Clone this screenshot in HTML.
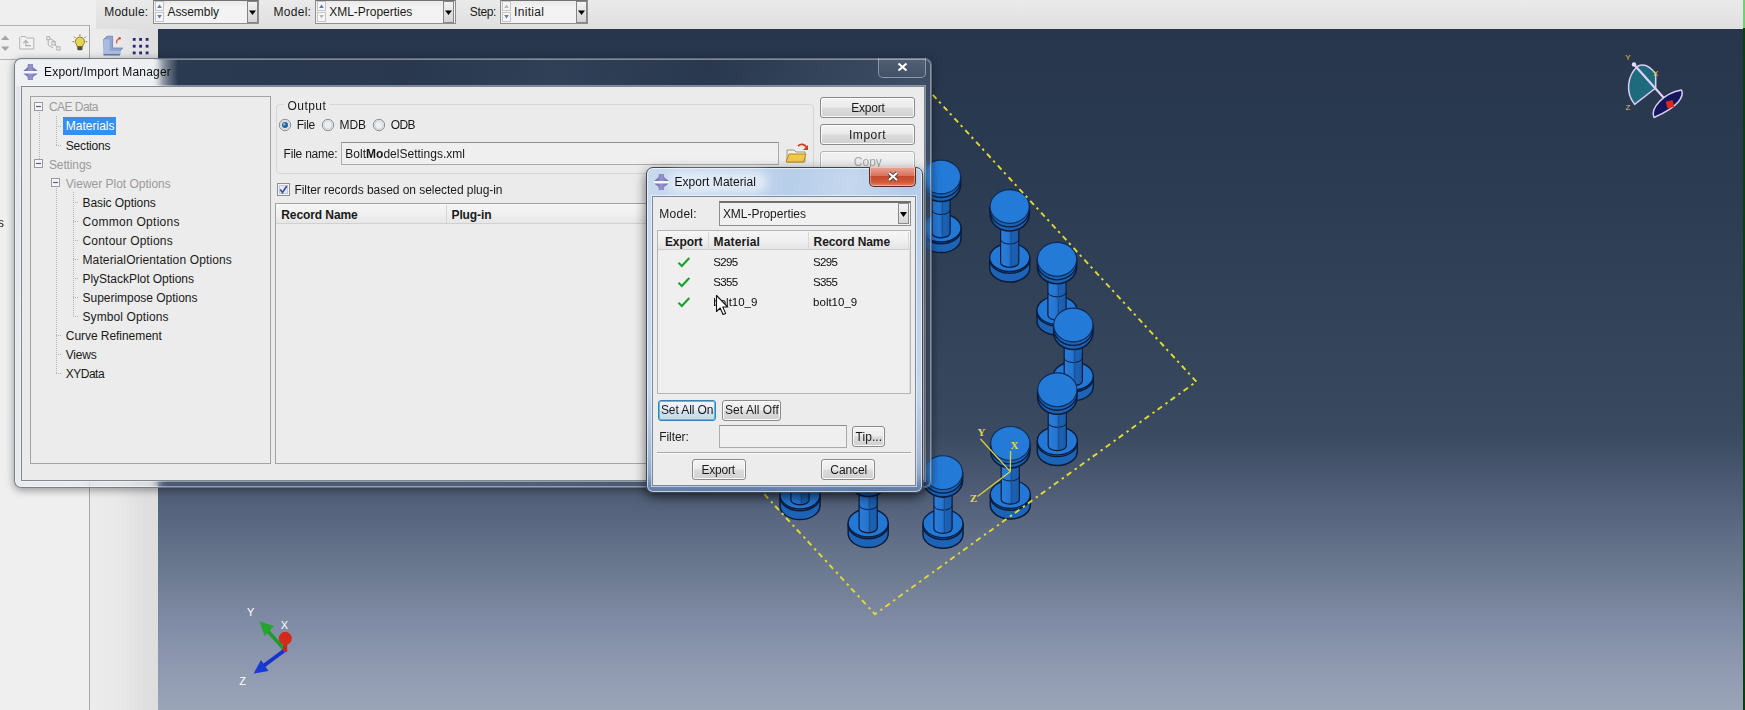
<!DOCTYPE html><html><head><meta charset="utf-8"><title>Abaqus/CAE - Export/Import Manager</title><style>
*{box-sizing:border-box;margin:0;padding:0}
html,body{width:1745px;height:710px;overflow:hidden;background:#f0f0f0;font-family:"Liberation Sans",sans-serif;font-size:12px;color:#1a1a1a}
.a{position:absolute}
.t{position:absolute;white-space:nowrap;line-height:16px;height:16px;font-size:12px;transform-origin:0 50%}
.b{font-weight:bold}
.g{color:#9a9a9a}
.btn{position:absolute;border:1px solid #8a8a8a;border-radius:3px;background:linear-gradient(#f4f4f4 0%,#ebebeb 48%,#dcdcdc 52%,#d0d0d0 100%);box-shadow:inset 0 0 0 1px #fafafa}
.btn span{position:absolute;left:0;right:0;text-align:center;line-height:16px;font-size:12px}
.combo{position:absolute;border:1px solid #8e8e8e;border-top:2px solid #707070;background:linear-gradient(#e9e9e9,#f3f3f3 30%,#f3f3f3)}
.panel{position:absolute;border:1px solid #a3a3a3;background:#ececec}
</style></head><body>
<div class="a" style="left:0;top:0;width:158px;height:710px;background:#efefef"></div>
<div class="a" style="left:90px;top:28px;width:68px;height:682px;background:linear-gradient(90deg,#ececec,#e9e9e9 40%,#dfdfdf 80%,#dedede)"></div>
<div class="a" style="left:89px;top:26px;width:1px;height:684px;background:#a9a9a9"></div>
<div class="a" style="left:0;top:25px;width:90px;height:1px;background:#b0b0b0"></div>
<div class="a" style="left:96px;top:0;width:1649px;height:28.5px;background:linear-gradient(#eaeaea,#dfdfdf)"></div>
<div class="a" style="left:158px;top:28.5px;width:1587px;height:681.5px;background:linear-gradient(#27364c 0%,#2b3b51 22%,#37475e 54.5%,#3a4a61 59.5%,#4d5c74 67.3%,#5d6c84 73.8%,#6d7b92 80.2%,#7e8aa3 86.5%,#8d98b0 93%,#9aa5b8 100%)"></div>
<div class="a" style="left:1743px;top:0;width:2px;height:28px;background:#6fd06f"></div>
<div class="a" style="left:1743px;top:28px;width:2px;height:682px;background:#0b3f0b"></div>
<div class="t " style="left:104.2px;top:4.300000000000001px;font-size:12px;letter-spacing:0.214px;">Module:</div>
<div class="combo" style="left:152.7px;top:-1px;width:106.5px;height:25px"></div>
<div class="a" style="left:154.7px;top:1px;width:9px;height:10px;border:1px solid #c5c5c5;background:#f6f6f6"></div>
<div class="a" style="left:154.7px;top:12px;width:9px;height:10px;border:1px solid #c5c5c5;background:#f6f6f6"></div>
<svg class="a" style="left:154.7px;top:1px" width="9" height="21"><path d="M4.5 3.500 L6.800 7 L2.200 7Z" fill="#5b76cc"/><path d="M2.200 14 L6.800 14 L4.500 17.500Z" fill="#5b76cc"/></svg>
<div class="t " style="left:167.5px;top:4.300000000000001px;font-size:12px;letter-spacing:-0.077px;">Assembly</div>
<div class="a" style="left:246.7px;top:1px;width:11px;height:21.5px;border:1px solid #858585;background:linear-gradient(#f3f3f3,#d4d4d4)"></div>
<svg class="a" style="left:246.7px;top:1px" width="11" height="21"><path d="M2 9.500 L9 9.500 L5.500 14Z" fill="#000"/></svg>
<div class="t " style="left:273.6px;top:4.300000000000001px;font-size:12px;letter-spacing:0.261px;">Model:</div>
<div class="combo" style="left:314.7px;top:-1px;width:141px;height:25px"></div>
<div class="a" style="left:316.7px;top:1px;width:9px;height:10px;border:1px solid #c5c5c5;background:#f6f6f6"></div>
<div class="a" style="left:316.7px;top:12px;width:9px;height:10px;border:1px solid #c5c5c5;background:#f6f6f6"></div>
<svg class="a" style="left:316.7px;top:1px" width="9" height="21"><path d="M4.5 3.500 L6.800 7 L2.200 7Z" fill="#5b76cc"/><path d="M2.200 14 L6.800 14 L4.500 17.500Z" fill="#b8b8b8"/></svg>
<div class="t " style="left:329.2px;top:4.300000000000001px;font-size:12px;letter-spacing:-0.020px;">XML-Properties</div>
<div class="a" style="left:443.2px;top:1px;width:11px;height:21.5px;border:1px solid #858585;background:linear-gradient(#f3f3f3,#d4d4d4)"></div>
<svg class="a" style="left:443.2px;top:1px" width="11" height="21"><path d="M2 9.500 L9 9.500 L5.500 14Z" fill="#000"/></svg>
<div class="t " style="left:469.8px;top:4.300000000000001px;font-size:12px;letter-spacing:-0.346px;">Step:</div>
<div class="combo" style="left:499.9px;top:-1px;width:88.3px;height:25px"></div>
<div class="a" style="left:501.9px;top:1px;width:9px;height:10px;border:1px solid #c5c5c5;background:#f6f6f6"></div>
<div class="a" style="left:501.9px;top:12px;width:9px;height:10px;border:1px solid #c5c5c5;background:#f6f6f6"></div>
<svg class="a" style="left:501.9px;top:1px" width="9" height="21"><path d="M4.5 3.500 L6.800 7 L2.200 7Z" fill="#b8b8b8"/><path d="M2.200 14 L6.800 14 L4.500 17.500Z" fill="#5b76cc"/></svg>
<div class="t " style="left:514px;top:4.300000000000001px;font-size:12px;letter-spacing:0.326px;">Initial</div>
<div class="a" style="left:575.6999999999999px;top:1px;width:11px;height:21.5px;border:1px solid #858585;background:linear-gradient(#f3f3f3,#d4d4d4)"></div>
<svg class="a" style="left:575.6999999999999px;top:1px" width="11" height="21"><path d="M2 9.500 L9 9.500 L5.500 14Z" fill="#000"/></svg>
<svg class="a" style="left:0;top:0" width="1745" height="710" viewBox="0 0 1745 710"><defs><linearGradient id="shk" x1="0" x2="1" y1="0" y2="0"><stop offset="0" stop-color="#2a7ddb"/><stop offset=".45" stop-color="#2576d2"/><stop offset=".55" stop-color="#1d63b4"/><stop offset="1" stop-color="#1b5cab"/></linearGradient></defs><g><path d="M921.0 228 v10.6 a20.0 14.0 0 0 0 40.0 0 v-10.6z" fill="#1d64b6" stroke="#0b1c3d" stroke-width="1.5"/><path d="M921.0 229.8 a20.0 14.0 0 0 0 40.0 0" fill="none" stroke="#0b1c3d" stroke-width="1.5"/><ellipse cx="941" cy="228" rx="20.0" ry="14.0" fill="#2378d6" stroke="#0b1c3d" stroke-width="1.3"/><path d="M931.9 185 V233 a9.1 4.800 0 0 0 18.2 0 V185z" fill="url(#shk)" stroke="#0b1c3d" stroke-width="1.2"/><path d="M931.9 210 a9.1 4.500 0 0 0 18.2 0" fill="none" stroke="#0b1c3d" stroke-width="1"/><path d="M942.5 199 V236.5" stroke="#184f98" stroke-width="1"/><path d="M921.4 177 v7.600 a19.6 16.9 0 0 0 39.2 0 v-7.600z" fill="#1c62b3" stroke="#0b1c3d" stroke-width="1.600"/><path d="M921.4 180.6 a19.6 16.9 0 0 0 39.2 0" fill="none" stroke="#0b1c3d" stroke-width="1.300"/><ellipse cx="941" cy="177" rx="19.6" ry="16.9" fill="#247ad7" stroke="#0f2a58" stroke-width="1.100"/></g><g><path d="M989.7 257.5 v10.6 a20.0 14.0 0 0 0 40.0 0 v-10.6z" fill="#1d64b6" stroke="#0b1c3d" stroke-width="1.5"/><path d="M989.7 259.3 a20.0 14.0 0 0 0 40.0 0" fill="none" stroke="#0b1c3d" stroke-width="1.5"/><ellipse cx="1009.7" cy="257.5" rx="20.0" ry="14.0" fill="#2378d6" stroke="#0b1c3d" stroke-width="1.3"/><path d="M1000.6 214.5 V262.5 a9.1 4.800 0 0 0 18.2 0 V214.5z" fill="url(#shk)" stroke="#0b1c3d" stroke-width="1.2"/><path d="M1000.6 239.5 a9.1 4.500 0 0 0 18.2 0" fill="none" stroke="#0b1c3d" stroke-width="1"/><path d="M1011.2 228.5 V266.0" stroke="#184f98" stroke-width="1"/><path d="M990.1 206.5 v7.600 a19.6 16.9 0 0 0 39.2 0 v-7.600z" fill="#1c62b3" stroke="#0b1c3d" stroke-width="1.600"/><path d="M990.1 210.1 a19.6 16.9 0 0 0 39.2 0" fill="none" stroke="#0b1c3d" stroke-width="1.300"/><ellipse cx="1009.7" cy="206.5" rx="19.6" ry="16.9" fill="#247ad7" stroke="#0f2a58" stroke-width="1.100"/></g><g><path d="M1037.0 310.3 v10.6 a20.0 14.0 0 0 0 40.0 0 v-10.6z" fill="#1d64b6" stroke="#0b1c3d" stroke-width="1.5"/><path d="M1037.0 312.1 a20.0 14.0 0 0 0 40.0 0" fill="none" stroke="#0b1c3d" stroke-width="1.5"/><ellipse cx="1057" cy="310.3" rx="20.0" ry="14.0" fill="#2378d6" stroke="#0b1c3d" stroke-width="1.3"/><path d="M1047.9 267.3 V315.3 a9.1 4.800 0 0 0 18.2 0 V267.3z" fill="url(#shk)" stroke="#0b1c3d" stroke-width="1.2"/><path d="M1047.9 292.3 a9.1 4.500 0 0 0 18.2 0" fill="none" stroke="#0b1c3d" stroke-width="1"/><path d="M1058.5 281.3 V318.8" stroke="#184f98" stroke-width="1"/><path d="M1037.4 259.3 v7.600 a19.6 16.9 0 0 0 39.2 0 v-7.600z" fill="#1c62b3" stroke="#0b1c3d" stroke-width="1.600"/><path d="M1037.4 262.90000000000003 a19.6 16.9 0 0 0 39.2 0" fill="none" stroke="#0b1c3d" stroke-width="1.300"/><ellipse cx="1057" cy="259.3" rx="19.6" ry="16.9" fill="#247ad7" stroke="#0f2a58" stroke-width="1.100"/></g><g><path d="M1053.3 376 v10.6 a20.0 14.0 0 0 0 40.0 0 v-10.6z" fill="#1d64b6" stroke="#0b1c3d" stroke-width="1.5"/><path d="M1053.3 377.8 a20.0 14.0 0 0 0 40.0 0" fill="none" stroke="#0b1c3d" stroke-width="1.5"/><ellipse cx="1073.3" cy="376" rx="20.0" ry="14.0" fill="#2378d6" stroke="#0b1c3d" stroke-width="1.3"/><path d="M1064.2 333 V381 a9.1 4.800 0 0 0 18.2 0 V333z" fill="url(#shk)" stroke="#0b1c3d" stroke-width="1.2"/><path d="M1064.2 358 a9.1 4.500 0 0 0 18.2 0" fill="none" stroke="#0b1c3d" stroke-width="1"/><path d="M1074.8 347 V384.5" stroke="#184f98" stroke-width="1"/><path d="M1053.7 325 v7.600 a19.6 16.9 0 0 0 39.2 0 v-7.600z" fill="#1c62b3" stroke="#0b1c3d" stroke-width="1.600"/><path d="M1053.7 328.6 a19.6 16.9 0 0 0 39.2 0" fill="none" stroke="#0b1c3d" stroke-width="1.300"/><ellipse cx="1073.3" cy="325" rx="19.6" ry="16.9" fill="#247ad7" stroke="#0f2a58" stroke-width="1.100"/></g><g><path d="M1037.3 440.8 v10.6 a20.0 14.0 0 0 0 40.0 0 v-10.6z" fill="#1d64b6" stroke="#0b1c3d" stroke-width="1.5"/><path d="M1037.3 442.6 a20.0 14.0 0 0 0 40.0 0" fill="none" stroke="#0b1c3d" stroke-width="1.5"/><ellipse cx="1057.3" cy="440.8" rx="20.0" ry="14.0" fill="#2378d6" stroke="#0b1c3d" stroke-width="1.3"/><path d="M1048.2 397.8 V445.8 a9.1 4.800 0 0 0 18.2 0 V397.8z" fill="url(#shk)" stroke="#0b1c3d" stroke-width="1.2"/><path d="M1048.2 422.8 a9.1 4.500 0 0 0 18.2 0" fill="none" stroke="#0b1c3d" stroke-width="1"/><path d="M1058.8 411.8 V449.3" stroke="#184f98" stroke-width="1"/><path d="M1037.7 389.8 v7.600 a19.6 16.9 0 0 0 39.2 0 v-7.600z" fill="#1c62b3" stroke="#0b1c3d" stroke-width="1.600"/><path d="M1037.7 393.40000000000003 a19.6 16.9 0 0 0 39.2 0" fill="none" stroke="#0b1c3d" stroke-width="1.300"/><ellipse cx="1057.3" cy="389.8" rx="19.6" ry="16.9" fill="#247ad7" stroke="#0f2a58" stroke-width="1.100"/></g><g><path d="M990.3 494.4 v10.6 a20.0 14.0 0 0 0 40.0 0 v-10.6z" fill="#1d64b6" stroke="#0b1c3d" stroke-width="1.5"/><path d="M990.3 496.2 a20.0 14.0 0 0 0 40.0 0" fill="none" stroke="#0b1c3d" stroke-width="1.5"/><ellipse cx="1010.3" cy="494.4" rx="20.0" ry="14.0" fill="#2378d6" stroke="#0b1c3d" stroke-width="1.3"/><path d="M1001.1999999999999 451.4 V499.4 a9.1 4.800 0 0 0 18.2 0 V451.4z" fill="url(#shk)" stroke="#0b1c3d" stroke-width="1.2"/><path d="M1001.1999999999999 476.4 a9.1 4.500 0 0 0 18.2 0" fill="none" stroke="#0b1c3d" stroke-width="1"/><path d="M1011.8 465.4 V502.9" stroke="#184f98" stroke-width="1"/><path d="M990.6999999999999 443.4 v7.600 a19.6 16.9 0 0 0 39.2 0 v-7.600z" fill="#1c62b3" stroke="#0b1c3d" stroke-width="1.600"/><path d="M990.6999999999999 447.0 a19.6 16.9 0 0 0 39.2 0" fill="none" stroke="#0b1c3d" stroke-width="1.300"/><ellipse cx="1010.3" cy="443.4" rx="19.6" ry="16.9" fill="#247ad7" stroke="#0f2a58" stroke-width="1.100"/></g><g><path d="M780.0 495 v10.6 a20.0 14.0 0 0 0 40.0 0 v-10.6z" fill="#1d64b6" stroke="#0b1c3d" stroke-width="1.5"/><path d="M780.0 496.8 a20.0 14.0 0 0 0 40.0 0" fill="none" stroke="#0b1c3d" stroke-width="1.5"/><ellipse cx="800" cy="495" rx="20.0" ry="14.0" fill="#2378d6" stroke="#0b1c3d" stroke-width="1.3"/><path d="M790.9 452 V500 a9.1 4.800 0 0 0 18.2 0 V452z" fill="url(#shk)" stroke="#0b1c3d" stroke-width="1.2"/><path d="M790.9 477 a9.1 4.500 0 0 0 18.2 0" fill="none" stroke="#0b1c3d" stroke-width="1"/><path d="M801.5 466 V503.5" stroke="#184f98" stroke-width="1"/><path d="M780.4 444 v7.600 a19.6 16.9 0 0 0 39.2 0 v-7.600z" fill="#1c62b3" stroke="#0b1c3d" stroke-width="1.600"/><path d="M780.4 447.6 a19.6 16.9 0 0 0 39.2 0" fill="none" stroke="#0b1c3d" stroke-width="1.300"/><ellipse cx="800" cy="444" rx="19.6" ry="16.9" fill="#247ad7" stroke="#0f2a58" stroke-width="1.100"/></g><g><path d="M848.2 523 v10.6 a20.0 14.0 0 0 0 40.0 0 v-10.6z" fill="#1d64b6" stroke="#0b1c3d" stroke-width="1.5"/><path d="M848.2 524.8 a20.0 14.0 0 0 0 40.0 0" fill="none" stroke="#0b1c3d" stroke-width="1.5"/><ellipse cx="868.2" cy="523" rx="20.0" ry="14.0" fill="#2378d6" stroke="#0b1c3d" stroke-width="1.3"/><path d="M859.1 480 V528 a9.1 4.800 0 0 0 18.2 0 V480z" fill="url(#shk)" stroke="#0b1c3d" stroke-width="1.2"/><path d="M859.1 505 a9.1 4.500 0 0 0 18.2 0" fill="none" stroke="#0b1c3d" stroke-width="1"/><path d="M869.7 494 V531.5" stroke="#184f98" stroke-width="1"/><path d="M848.6 472 v7.600 a19.6 16.9 0 0 0 39.2 0 v-7.600z" fill="#1c62b3" stroke="#0b1c3d" stroke-width="1.600"/><path d="M848.6 475.6 a19.6 16.9 0 0 0 39.2 0" fill="none" stroke="#0b1c3d" stroke-width="1.300"/><ellipse cx="868.2" cy="472" rx="19.6" ry="16.9" fill="#247ad7" stroke="#0f2a58" stroke-width="1.100"/></g><g><path d="M923.0 523.6 v10.6 a20.0 14.0 0 0 0 40.0 0 v-10.6z" fill="#1d64b6" stroke="#0b1c3d" stroke-width="1.5"/><path d="M923.0 525.4 a20.0 14.0 0 0 0 40.0 0" fill="none" stroke="#0b1c3d" stroke-width="1.5"/><ellipse cx="943" cy="523.6" rx="20.0" ry="14.0" fill="#2378d6" stroke="#0b1c3d" stroke-width="1.3"/><path d="M933.9 480.6 V528.6 a9.1 4.800 0 0 0 18.2 0 V480.6z" fill="url(#shk)" stroke="#0b1c3d" stroke-width="1.2"/><path d="M933.9 505.6 a9.1 4.500 0 0 0 18.2 0" fill="none" stroke="#0b1c3d" stroke-width="1"/><path d="M944.5 494.6 V532.1" stroke="#184f98" stroke-width="1"/><path d="M923.4 472.6 v7.600 a19.6 16.9 0 0 0 39.2 0 v-7.600z" fill="#1c62b3" stroke="#0b1c3d" stroke-width="1.600"/><path d="M923.4 476.20000000000005 a19.6 16.9 0 0 0 39.2 0" fill="none" stroke="#0b1c3d" stroke-width="1.300"/><ellipse cx="943" cy="472.6" rx="19.6" ry="16.9" fill="#247ad7" stroke="#0f2a58" stroke-width="1.100"/></g><path d="M932.8 94.800 L1196.4 381.600 L875 614.200 L763.200 493" fill="none" stroke="#e2da30" stroke-width="1.900" stroke-dasharray="5.500 3.800 2.400 4.300"/><g stroke="#d9d43a" stroke-width="1.3" fill="none"><path d="M1010.3 471.600L980.500 439"/><path d="M1010.3 471.600L1010.6 451"/><path d="M1010.300 471.600L977.500 496.500"/></g><g font-family="Liberation Serif,serif" font-weight="bold" font-size="11" fill="#e0da3c" text-anchor="middle"><text x="981.5" y="436">Y</text><text x="1014.5" y="449">X</text><text x="973.5" y="502">Z</text></g><g><path d="M285 650 L265 628" stroke="#1f9a2c" stroke-width="3.6"/><path d="M259.300 621.300 L274 626 L264.500 636z" fill="#25a530"/><path d="M285 650 L262 667" stroke="#1634c8" stroke-width="3.800"/><path d="M253.600 673.600 L261 660 L268.500 671z" fill="#1a3ad6"/><path d="M285.200 652 V640" stroke="#c8281c" stroke-width="4"/><circle cx="285.300" cy="638.300" r="6.500" fill="#d42a1c"/></g><g font-family="Liberation Sans,sans-serif" font-size="11" fill="#fff" text-anchor="middle"><text x="250.600" y="616">Y</text><text x="284.400" y="629">X</text><text x="242.500" y="684.500">Z</text></g><g><path d="M1655.700 88 L1634.600 104.400 A28 28 0 0 1 1638 66 Q1647 62 1655.700 74z" fill="#1f6b7e" stroke="#d9cdf2" stroke-width="1.500" stroke-linejoin="round"/><path d="M1634 64.400 L1667.500 102" stroke="#ddd2f4" stroke-width="2.200"/><circle cx="1634" cy="64.400" r="2.200" fill="#e6dcfa"/><path d="M1654 117.500 C1650 108 1664 93 1681.500 90 C1684 96 1680 106 1654 117.500z" fill="#15155e" stroke="#d9cdf2" stroke-width="1.500" stroke-linejoin="round"/><rect x="1666.500" y="100.700" width="7" height="7" fill="#e02818" transform="rotate(-15 1670 104.200)"/></g><g font-family="Liberation Sans,sans-serif" font-size="8" fill="#e2c93a" text-anchor="middle"><text x="1628" y="60">Y</text><text x="1655.700" y="76">X</text><text x="1628" y="110">Z</text></g></svg>
<div class="a" style="left:0;top:59px;width:89px;height:1px;background:#b2b2b2"></div>
<svg class="a" style="left:0;top:30px" width="158" height="28" viewBox="0 30 158 28"><path d="M1 40 L5.200 35.600 L9.400 40z M1 46.600 L9.400 46.600 L5.200 51z" fill="#a3a3a3"/><path d="M19.700 49 V37.800 l1.200-1.300 h4.300 l1.300 1.500 h7.300 V49z" fill="#f1f1f1" stroke="#b3b3b3" stroke-width="1"/><path d="M23.300 43.200 l2.500-2.600 2.500 2.600 M25.800 40.800 v4.800 h5" fill="none" stroke="#aaa" stroke-width="1.100"/><g fill="#f3f3f3" stroke="#b0b0b0" stroke-width="1"><path d="M48.200 39.500 v5.500 l5 3 M50 38.500 l5 3 v3.500 l4 3" fill="none"/><rect x="46.800" y="36.700" width="3" height="3"/><rect x="51.800" y="41.800" width="3.200" height="3.200"/><rect x="56.800" y="46.800" width="3.200" height="3.200"/></g><g stroke="#5f6238" stroke-width="0.900"><path d="M79.900 34.500v1.600 M74 36.600l1.300 1.300 M85.800 36.600l-1.300 1.300 M72.600 41.700h1.500 M87.200 41.700h-1.500"/></g><path d="M79.900 37 a4.600 4.600 0 0 1 3 8.100 v1.400 h-6 v-1.400 a4.600 4.600 0 0 1 3-8.100z" fill="#e8d44e" stroke="#7d7a3a" stroke-width="0.900"/><rect x="77.300" y="46.500" width="5.200" height="3.800" rx="1" fill="#4d5536"/><path d="M103.500 39.500 l3.500-3.300 h5.600 v11.800 h10.300 l-3 3.200 v3.600 h-15.600 z" fill="#90a6cf" stroke="#6f84b4" stroke-width="0.800"/><path d="M103.500 39.500 h6 v11.600 h10.400 v3.700 h-16.400z" fill="#a9bde0"/><path d="M103.500 54.800h16.400" stroke="#5b6f9c" stroke-width="1.200"/><path d="M117.200 43.300 c-1.500-1.500 -0.300-3.500 1.700-4.500" fill="none" stroke="#e05a4a" stroke-width="1.300"/><circle cx="119.600" cy="38.300" r="1.300" fill="#e2402e"/><rect x="132.79999999999998" y="38.0" width="2.800" height="2.800" fill="#25257c"/><rect x="132.79999999999998" y="44.800000000000004" width="2.800" height="2.800" fill="#25257c"/><rect x="132.79999999999998" y="51.5" width="2.800" height="2.800" fill="#25257c"/><rect x="139.2" y="38.0" width="2.800" height="2.800" fill="#25257c"/><rect x="139.2" y="44.800000000000004" width="2.800" height="2.800" fill="#25257c"/><rect x="139.2" y="51.5" width="2.800" height="2.800" fill="#25257c"/><rect x="145.7" y="38.0" width="2.800" height="2.800" fill="#25257c"/><rect x="145.7" y="44.800000000000004" width="2.800" height="2.800" fill="#25257c"/><rect x="145.7" y="51.5" width="2.800" height="2.800" fill="#25257c"/></svg>
<div class="a" style="left:14px;top:58px;width:918px;height:430px;border-radius:7px;border:1px solid rgba(105,115,130,.9);box-shadow:0 2px 8px 0 rgba(0,0,0,.4),inset 0 0 0 1px rgba(255,255,255,.4);background:linear-gradient(100deg,rgba(120,160,215,.10) 0%,rgba(120,160,215,.03) 18%,rgba(120,160,215,.02) 40%,rgba(160,190,230,.07) 55%,rgba(120,160,215,.02) 70%,rgba(190,210,240,.15) 92%,rgba(120,160,215,.05) 100%);backdrop-filter:blur(4px)"></div>
<div class="a" style="left:16px;top:60px;width:136px;height:26px;background:#eef0f3;border-radius:6px 0 0 0"></div>
<div class="a" style="left:152px;top:60px;width:26px;height:26px;background:linear-gradient(90deg,#eef0f3,rgba(238,240,243,.5) 40%,rgba(238,240,243,0))"></div>
<svg class="a" style="left:23px;top:64.3px" width="15" height="16" viewBox="0 0 14.5 15.4"><defs><linearGradient id="ig23" x1="0" x2="1" y1="0" y2="0"><stop offset="0" stop-color="#6464aa"/><stop offset=".5" stop-color="#9494cc"/><stop offset="1" stop-color="#6464aa"/></linearGradient></defs><path d="M4.600 0 H9.600 V2.300 C10 4.200 13 5 14.300 6.800 H0.200 C1.500 5 4.200 4.200 4.600 2.300Z M0.200 9 H14.300 C13 10.800 10 11.600 9.600 13.200 V15.400 H4.600 V13.200 C4.200 11.600 1.500 10.800 0.200 9Z" fill="url(#ig23)"/><rect x="0" y="6.800" width="14.500" height="2.200" fill="#f6f6ff"/></svg>
<div class="t " style="left:44px;top:64.4px;font-size:12px;letter-spacing:0.204px;color:#101010">Export/Import Manager</div>
<div class="a" style="left:878px;top:58px;width:48px;height:20px;border:1px solid rgba(190,205,225,.55);border-top:none;border-radius:0 0 5px 5px;background:linear-gradient(rgba(255,255,255,.12),rgba(255,255,255,.04))"></div>
<svg class="a" style="left:896px;top:61px" width="13" height="12" viewBox="0 0 13 12"><path d="M2.500 2.500 L10.500 9.500 M10.500 2.500 L2.500 9.500" stroke="#fff" stroke-width="2.100" stroke-linecap="butt"/></svg>
<div class="a" style="left:21px;top:86px;width:904px;height:395px;background:#ebebeb;border:1px solid #7f8791;box-shadow:0 0 0 1px rgba(255,255,255,.4)"></div>
<div class="panel" style="left:30px;top:96px;width:241px;height:368px"></div>
<div class="a" style="left:39px;top:112px;width:1px;height:48px;background:repeating-linear-gradient(#b4b4b4 0 1px,transparent 1px 2px)"></div>
<div class="a" style="left:56px;top:116px;width:1px;height:30px;background:repeating-linear-gradient(#b4b4b4 0 1px,transparent 1px 2px)"></div>
<div class="a" style="left:56px;top:188px;width:1px;height:186px;background:repeating-linear-gradient(#b4b4b4 0 1px,transparent 1px 2px)"></div>
<div class="a" style="left:73px;top:192px;width:1px;height:125px;background:repeating-linear-gradient(#b4b4b4 0 1px,transparent 1px 2px)"></div>
<div class="a" style="left:56px;top:126px;width:5px;height:1px;background:repeating-linear-gradient(90deg,#b4b4b4 0 1px,transparent 1px 2px)"></div>
<div class="a" style="left:56px;top:145px;width:5px;height:1px;background:repeating-linear-gradient(90deg,#b4b4b4 0 1px,transparent 1px 2px)"></div>
<div class="a" style="left:56px;top:335px;width:5px;height:1px;background:repeating-linear-gradient(90deg,#b4b4b4 0 1px,transparent 1px 2px)"></div>
<div class="a" style="left:56px;top:354px;width:5px;height:1px;background:repeating-linear-gradient(90deg,#b4b4b4 0 1px,transparent 1px 2px)"></div>
<div class="a" style="left:56px;top:373px;width:5px;height:1px;background:repeating-linear-gradient(90deg,#b4b4b4 0 1px,transparent 1px 2px)"></div>
<div class="a" style="left:73px;top:202px;width:5px;height:1px;background:repeating-linear-gradient(90deg,#b4b4b4 0 1px,transparent 1px 2px)"></div>
<div class="a" style="left:73px;top:221px;width:5px;height:1px;background:repeating-linear-gradient(90deg,#b4b4b4 0 1px,transparent 1px 2px)"></div>
<div class="a" style="left:73px;top:240px;width:5px;height:1px;background:repeating-linear-gradient(90deg,#b4b4b4 0 1px,transparent 1px 2px)"></div>
<div class="a" style="left:73px;top:259px;width:5px;height:1px;background:repeating-linear-gradient(90deg,#b4b4b4 0 1px,transparent 1px 2px)"></div>
<div class="a" style="left:73px;top:278px;width:5px;height:1px;background:repeating-linear-gradient(90deg,#b4b4b4 0 1px,transparent 1px 2px)"></div>
<div class="a" style="left:73px;top:297px;width:5px;height:1px;background:repeating-linear-gradient(90deg,#b4b4b4 0 1px,transparent 1px 2px)"></div>
<div class="a" style="left:73px;top:316px;width:5px;height:1px;background:repeating-linear-gradient(90deg,#b4b4b4 0 1px,transparent 1px 2px)"></div>
<svg class="a" style="left:34px;top:102px" width="9" height="9"><rect x="0.5" y="0.5" width="8" height="8" fill="#f6f6f6" stroke="#9a9a9a"/><path d="M2 4.5H7" stroke="#4f5fa8" stroke-width="1.2"/></svg>
<div class="t g" style="left:49px;top:99px;font-size:12px;letter-spacing:-0.545px;">CAE Data</div>
<div class="a" style="left:63px;top:117px;width:53px;height:18px;background:#3390f0"></div>
<div class="t " style="left:65.8px;top:118px;font-size:12px;letter-spacing:0.001px;color:#fff">Materials</div>
<div class="t " style="left:65.8px;top:137.5px;font-size:12px;letter-spacing:-0.191px;">Sections</div>
<svg class="a" style="left:34px;top:159px" width="9" height="9"><rect x="0.5" y="0.5" width="8" height="8" fill="#f6f6f6" stroke="#9a9a9a"/><path d="M2 4.5H7" stroke="#4f5fa8" stroke-width="1.2"/></svg>
<div class="t g" style="left:49px;top:156.5px;font-size:12px;letter-spacing:-0.132px;">Settings</div>
<svg class="a" style="left:51px;top:178px" width="9" height="9"><rect x="0.5" y="0.5" width="8" height="8" fill="#f6f6f6" stroke="#9a9a9a"/><path d="M2 4.5H7" stroke="#4f5fa8" stroke-width="1.2"/></svg>
<div class="t g" style="left:65.8px;top:175.5px;font-size:12px;letter-spacing:-0.014px;">Viewer Plot Options</div>
<div class="t " style="left:82.5px;top:194.5px;font-size:12px;letter-spacing:-0.065px;">Basic Options</div>
<div class="t " style="left:82.5px;top:213.5px;font-size:12px;letter-spacing:0.280px;">Common Options</div>
<div class="t " style="left:82.5px;top:232.5px;font-size:12px;letter-spacing:0.201px;">Contour Options</div>
<div class="t " style="left:82.5px;top:251.5px;font-size:12px;letter-spacing:0.123px;">MaterialOrientation Options</div>
<div class="t " style="left:82.5px;top:270.5px;font-size:12px;letter-spacing:-0.033px;">PlyStackPlot Options</div>
<div class="t " style="left:82.5px;top:289.5px;font-size:12px;letter-spacing:-0.021px;">Superimpose Options</div>
<div class="t " style="left:82.5px;top:308.5px;font-size:12px;letter-spacing:0.100px;">Symbol Options</div>
<div class="t " style="left:65.8px;top:327.5px;font-size:12px;letter-spacing:-0.051px;">Curve Refinement</div>
<div class="t " style="left:65.8px;top:346.5px;font-size:12px;letter-spacing:-0.239px;">Views</div>
<div class="t " style="left:65.8px;top:365.5px;font-size:12px;letter-spacing:-0.510px;">XYData</div>
<div class="a" style="left:276px;top:104px;width:538px;height:70px;border:1px solid #d6d6d6;border-radius:4px"></div>
<div class="a" style="left:284px;top:100px;width:45px;height:10px;background:#ebebeb"></div>
<div class="t " style="left:287.5px;top:97.5px;font-size:12px;letter-spacing:0.461px;">Output</div>
<svg class="a" style="left:278px;top:118px" width="14" height="14"><circle cx="7" cy="7" r="5.7" fill="#eee" stroke="#8a8f96" stroke-width="1"/><circle cx="7" cy="7" r="4.2" fill="none" stroke="#c9ccd0" stroke-width="1"/><circle cx="7" cy="7" r="3" fill="#1f5f9a"/><circle cx="6.2" cy="6.2" r="1.2" fill="#7ec0ee"/></svg>
<div class="t " style="left:296.7px;top:117px;font-size:12px;letter-spacing:-0.261px;">File</div>
<svg class="a" style="left:321px;top:118px" width="14" height="14"><circle cx="7" cy="7" r="5.7" fill="#eee" stroke="#8a8f96" stroke-width="1"/><circle cx="7" cy="7" r="4.2" fill="none" stroke="#c9ccd0" stroke-width="1"/></svg>
<div class="t " style="left:339.6px;top:117px;font-size:12px;letter-spacing:-0.157px;">MDB</div>
<svg class="a" style="left:372px;top:118px" width="14" height="14"><circle cx="7" cy="7" r="5.7" fill="#eee" stroke="#8a8f96" stroke-width="1"/><circle cx="7" cy="7" r="4.2" fill="none" stroke="#c9ccd0" stroke-width="1"/></svg>
<div class="t " style="left:390.7px;top:117px;font-size:12px;letter-spacing:-0.572px;">ODB</div>
<div class="t " style="left:283.6px;top:145.5px;font-size:12px;letter-spacing:-0.223px;">File name:</div>
<div class="a" style="left:341px;top:142px;width:438px;height:23px;border:1px solid #ababab;border-top-color:#8f8f8f;background:#efefef"></div>
<div class="t " style="left:345.3px;top:145.5px;font-size:12px;letter-spacing:0.015px;">Bolt<b>Mo</b>delSettings.xml</div>
<svg class="a" style="left:785px;top:142px" width="24" height="22" viewBox="0 0 24 22"><path d="M2 8h7l2 2h9v10H2z" fill="#f3efe2" stroke="#9c9686" stroke-width="1"/><path d="M1 20l3-8h17l-2.5 8z" fill="#f2c84a" stroke="#b08a1e" stroke-width="1"/><path d="M13 4c3-2.5 7-2 8.5 1.500" fill="none" stroke="#d03a22" stroke-width="1.8"/><path d="M23 3v5h-5z" fill="#d03a22"/></svg>
<div class="btn" style="left:820px;top:97px;width:95px;height:21px;"></div>
<div class="t " style="left:851.2px;top:99.8px;font-size:12px;letter-spacing:-0.215px;">Export</div>
<div class="btn" style="left:820px;top:124px;width:95px;height:21px;"></div>
<div class="t " style="left:849px;top:126.80000000000001px;font-size:12px;letter-spacing:0.531px;">Import</div>
<div class="btn" style="left:820px;top:151px;width:95px;height:21px;background:#efefef;border-color:#b5b5b5"></div>
<div class="t " style="left:853.8px;top:153.8px;font-size:12px;letter-spacing:-0.004px;color:#a9a9a9">Copy</div>
<svg class="a" style="left:277px;top:183px" width="13" height="13"><rect x="0.5" y="0.5" width="12" height="12" fill="#f4f4f4" stroke="#8e8f8f"/><rect x="2.5" y="2.500" width="8" height="8" fill="#e6e9ee" stroke="#c3c8d0"/><path d="M3.200 6.500l2.300 3 4.300-6.500" fill="none" stroke="#3a4fb0" stroke-width="1.700"/></svg>
<div class="t " style="left:294.4px;top:182px;font-size:12px;letter-spacing:-0.051px;">Filter records based on selected plug-in</div>
<div class="panel" style="left:275px;top:203px;width:540px;height:261px"></div>
<div class="a" style="left:276px;top:204px;width:538px;height:20px;background:linear-gradient(#f7f7f7,#eeeeee 60%,#e6e6e6);border-bottom:1px solid #d0d0d0"></div>
<div class="a" style="left:446px;top:205px;width:1px;height:18px;background:#d5d5d5"></div>
<div class="t b" style="left:281.3px;top:207px;font-size:12px;letter-spacing:-0.089px;">Record Name</div>
<div class="t b" style="left:451.5px;top:207px;font-size:12px;letter-spacing:-0.110px;">Plug-in</div>
<div class="a" style="left:645.5px;top:167px;width:277.5px;height:326px;border-radius:7px;border:1px solid #3d4654;box-shadow:0 4px 12px 0 rgba(0,0,0,.6),inset 0 0 0 1px rgba(255,255,255,.6);background:linear-gradient(180deg,rgba(60,95,150,0) 0%,rgba(60,95,150,0) 70%,rgba(50,85,140,.25) 90%,rgba(45,80,135,.5) 100%),linear-gradient(100deg,rgba(190,212,238,.74) 0%,rgba(168,198,234,.76) 45%,rgba(184,208,238,.74) 62%,rgba(164,195,232,.76) 80%,rgba(188,210,238,.7) 100%);backdrop-filter:blur(4px)"></div>
<div class="a" style="left:668px;top:171px;width:100px;height:22px;border-radius:11px;background:rgba(236,243,250,.75);filter:blur(5px)"></div>
<svg class="a" style="left:653.6px;top:173.9px" width="15" height="16" viewBox="0 0 14.5 15.4"><defs><linearGradient id="ig653" x1="0" x2="1" y1="0" y2="0"><stop offset="0" stop-color="#6464aa"/><stop offset=".5" stop-color="#9494cc"/><stop offset="1" stop-color="#6464aa"/></linearGradient></defs><path d="M4.600 0 H9.600 V2.300 C10 4.200 13 5 14.300 6.800 H0.200 C1.500 5 4.200 4.200 4.600 2.300Z M0.200 9 H14.300 C13 10.800 10 11.600 9.600 13.200 V15.400 H4.600 V13.200 C4.200 11.600 1.500 10.800 0.200 9Z" fill="url(#ig653)"/><rect x="0" y="6.800" width="14.500" height="2.200" fill="#f6f6ff"/></svg>
<div class="t " style="left:674.4px;top:173.5px;font-size:12px;letter-spacing:0.060px;color:#101010">Export Material</div>
<div class="a" style="left:869px;top:167px;width:47px;height:20px;border:1px solid #5b2c26;border-top:none;border-radius:0 0 5px 5px;background:linear-gradient(#e9a898 0%,#d8735d 45%,#c5492d 50%,#cf5a3a 80%,#dd8a66 100%);box-shadow:inset 0 0 0 1px rgba(255,255,255,.35)"></div>
<svg class="a" style="left:886px;top:170px" width="14" height="13" viewBox="0 0 14 13"><path d="M3 3 L11 10 M11 3 L3 10" stroke="#4a3f4a" stroke-width="3.800"/><path d="M3 3 L11 10 M11 3 L3 10" stroke="#fff" stroke-width="2.100"/></svg>
<div class="a" style="left:652px;top:196px;width:264px;height:290px;background:#ececec;border:1px solid #7c8896;box-shadow:0 0 0 1px rgba(255,255,255,.55)"></div>
<div class="t " style="left:659.3px;top:205.5px;font-size:12px;letter-spacing:0.261px;">Model:</div>
<div class="combo" style="left:719px;top:201px;width:192px;height:25px;background:#f1f1f1"></div>
<div class="t " style="left:722.9px;top:205.5px;font-size:12px;letter-spacing:-0.020px;">XML-Properties</div>
<div class="a" style="left:898px;top:203px;width:11px;height:21px;border:1px solid #8a8a8a;background:linear-gradient(#f3f3f3,#d6d6d6)"></div>
<svg class="a" style="left:898px;top:203px" width="11" height="21"><path d="M2 9 L9 9 L5.5 14Z" fill="#000"/></svg>
<div class="panel" style="left:657px;top:230px;width:254px;height:164px;border-color:#b5b5b5;background:#efefef"></div>
<div class="a" style="left:658px;top:231px;width:252px;height:19px;background:linear-gradient(#f6f6f6,#eeeeee 60%,#e4e4e4);border-bottom:1px solid #cfcfcf"></div>
<div class="a" style="left:708px;top:232px;width:1px;height:17px;background:#d8d8d8"></div>
<div class="a" style="left:808px;top:232px;width:1px;height:17px;background:#d8d8d8"></div>
<div class="a" style="left:908px;top:232px;width:1px;height:17px;background:#d8d8d8"></div>
<div class="t b" style="left:664.9px;top:234px;font-size:12px;letter-spacing:-0.069px;">Export</div>
<div class="t b" style="left:713.6px;top:234px;font-size:12px;letter-spacing:0.130px;">Material</div>
<div class="t b" style="left:813.6px;top:234px;font-size:12px;letter-spacing:-0.089px;">Record Name</div>
<svg class="a" style="left:677px;top:255.7px" width="14" height="12" viewBox="0 0 14 12"><path d="M1.500 6.800 L4.800 10 L12.300 2" fill="none" stroke="#18a02c" stroke-width="2.100" stroke-linejoin="miter"/></svg>
<div class="t " style="left:713.3px;top:253.7px;font-size:11.5px;letter-spacing:-0.665px;color:#0c0c0c">S295</div>
<div class="t " style="left:813.1px;top:253.7px;font-size:11.5px;letter-spacing:-0.665px;color:#0c0c0c">S295</div>
<svg class="a" style="left:677px;top:275.7px" width="14" height="12" viewBox="0 0 14 12"><path d="M1.500 6.800 L4.800 10 L12.300 2" fill="none" stroke="#18a02c" stroke-width="2.100" stroke-linejoin="miter"/></svg>
<div class="t " style="left:713.3px;top:273.7px;font-size:11.5px;letter-spacing:-0.665px;color:#0c0c0c">S355</div>
<div class="t " style="left:813.1px;top:273.7px;font-size:11.5px;letter-spacing:-0.665px;color:#0c0c0c">S355</div>
<svg class="a" style="left:677px;top:295.7px" width="14" height="12" viewBox="0 0 14 12"><path d="M1.500 6.800 L4.800 10 L12.300 2" fill="none" stroke="#18a02c" stroke-width="2.100" stroke-linejoin="miter"/></svg>
<div class="t " style="left:713.3px;top:293.7px;font-size:11.5px;letter-spacing:-0.003px;color:#0c0c0c">bolt10_9</div>
<div class="t " style="left:813.1px;top:293.7px;font-size:11.5px;letter-spacing:-0.003px;color:#0c0c0c">bolt10_9</div>
<div class="a" style="left:909px;top:251px;width:1px;height:142px;background:#dcdcdc"></div>
<div class="btn" style="left:658px;top:399.5px;width:58px;height:21px;border-color:#3c7fb1;box-shadow:inset 0 0 0 1px #48c3f0;background:linear-gradient(#f2f6f9 0%,#e6eef4 48%,#d3e2ee 52%,#c6d9e8 100%)"></div>
<div class="t " style="left:660.9px;top:402.3px;font-size:12px;letter-spacing:-0.087px;">Set All On</div>
<div class="btn" style="left:722px;top:399.5px;width:59px;height:21px;"></div>
<div class="t " style="left:725px;top:402.3px;font-size:12px;letter-spacing:0.060px;">Set All Off</div>
<div class="t " style="left:659.2px;top:429px;font-size:12px;letter-spacing:-0.057px;">Filter:</div>
<div class="a" style="left:719px;top:425px;width:128px;height:23px;border:1px solid #ababab;border-top-color:#8f8f8f;background:#efefef"></div>
<div class="btn" style="left:852px;top:426px;width:32.5px;height:21px;"></div>
<div class="t " style="left:855.6px;top:428.8px;font-size:12px;letter-spacing:0.028px;">Tip...</div>
<div class="a" style="left:657px;top:452px;width:254px;height:1px;background:#a8a8a8"></div><div class="a" style="left:657px;top:453px;width:254px;height:1px;background:#fafafa"></div>
<div class="btn" style="left:692px;top:459px;width:54px;height:21px;"></div>
<div class="t " style="left:701.5px;top:461.8px;font-size:12px;letter-spacing:-0.215px;">Export</div>
<div class="btn" style="left:821px;top:459px;width:54px;height:21px;"></div>
<div class="t " style="left:830.3px;top:461.8px;font-size:12px;letter-spacing:-0.077px;">Cancel</div>
<svg class="a" style="left:715px;top:294px" width="14" height="22" viewBox="0 0 14 22"><path d="M1.500 1.500 V17.500 L5.200 14 L8 20.500 L10.600 19.400 L7.800 13 H12.800z" fill="#fff" stroke="#111" stroke-width="1.100" stroke-linejoin="round"/></svg>
<div class="t " style="left:-2px;top:215px;font-size:12px;">s</div>
</body></html>
